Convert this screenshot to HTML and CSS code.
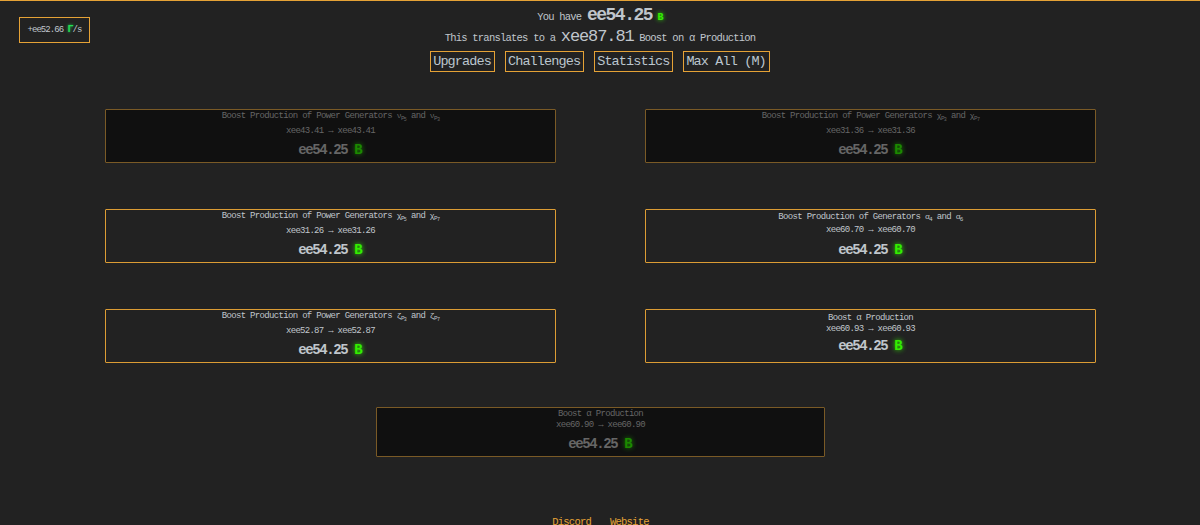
FILE: index.html
```html
<!DOCTYPE html>
<html lang="en">
<head>
<meta charset="utf-8">
<title>Boosts</title>
<link rel="stylesheet" href="styles.css">
</head>
<body>
<div class="rate">+ee52.66 <span class="gamma">Γ</span>/s</div>
<header class="head">
  <p class="have">You have <span class="big">ee54.25</span> <span class="bb">B</span></p>
  <p class="trans">This translates to a <span class="big2">xee87.81</span> Boost on α Production</p>
  <nav class="tabs">
    <button class="tab">Upgrades</button>
    <button class="tab">Challenges</button>
    <button class="tab">Statistics</button>
    <button class="tab">Max All (M)</button>
  </nav>
</header>
<main class="grid">
  <div class="card off">
    <div class="title">Boost Production of Power Generators <span class="g">ν<sub>P<sub>5</sub></sub></span> and <span class="g">ν<sub>P<sub>3</sub></sub></span></div>
    <div class="val">xee43.41 → xee43.41</div>
    <div class="cost">ee54.25 <span class="b">B</span></div>
  </div>
  <div class="card off">
    <div class="title">Boost Production of Power Generators <span class="g">χ<sub>P<sub>3</sub></sub></span> and <span class="g">χ<sub>P<sub>7</sub></sub></span></div>
    <div class="val">xee31.36 → xee31.36</div>
    <div class="cost">ee54.25 <span class="b">B</span></div>
  </div>
  <div class="card">
    <div class="title">Boost Production of Power Generators <span class="g">χ<sub>P<sub>5</sub></sub></span> and <span class="g">χ<sub>P<sub>7</sub></sub></span></div>
    <div class="val">xee31.26 → xee31.26</div>
    <div class="cost">ee54.25 <span class="b">B</span></div>
  </div>
  <div class="card gens">
    <div class="title">Boost Production of Generators <span class="g">α<sub>4</sub></span> and <span class="g">α<sub>6</sub></span></div>
    <div class="val">xee60.70 → xee60.70</div>
    <div class="cost">ee54.25 <span class="b">B</span></div>
  </div>
  <div class="card">
    <div class="title">Boost Production of Power Generators <span class="g">ζ<sub>P<sub>3</sub></sub></span> and <span class="g">ζ<sub>P<sub>7</sub></sub></span></div>
    <div class="val">xee52.87 → xee52.87</div>
    <div class="cost">ee54.25 <span class="b">B</span></div>
  </div>
  <div class="card plain">
    <div class="title">Boost α Production</div>
    <div class="val">xee60.93 → xee60.93</div>
    <div class="cost">ee54.25 <span class="b">B</span></div>
  </div>
  <div class="card off wide">
    <div class="title">Boost α Production</div>
    <div class="val">xee60.90 → xee60.90</div>
    <div class="cost">ee54.25 <span class="b">B</span></div>
  </div>
</main>
<footer class="foot">
  <a class="link" href="#">Discord</a>
  <a class="link" href="#">Website</a>
</footer>
</body>
</html>
```
FILE: styles.css
```css
html, body { margin: 0; padding: 0; }
body {
  background: #222222;
  color: #c0c6cc;
  font-family: "Liberation Mono", "DejaVu Sans Mono", monospace;
  font-size: 10.5px;
  letter-spacing: -0.77px;
  border-top: 1px solid #e5a236;
  height: 524px;
  overflow: hidden;
  text-align: center;
}
p { margin: 0; }
.rate {
  position: absolute;
  left: 19px;
  top: 17px;
  box-sizing: border-box;
  width: 71px;
  height: 26px;
  line-height: 24px;
  border: 1px solid #e5a236;
  font-size: 9px;
  letter-spacing: -0.95px;
  text-align: center;
  white-space: nowrap;
}
.gamma { color: #22dd55; font-weight: bold; font-size: 10px; text-shadow: 0 0 3px #22dd55; }
.head { height: 108px; }
.have { height: 23px; padding-top: 3px; line-height: 23px; }
.big { font-size: 18px; font-weight: bold; letter-spacing: -1.5px; }
.bb { color: #33ee00; font-weight: bold; font-size: 10px; text-shadow: 0 0 4px #33ee00; }
.trans { height: 20px; line-height: 20px; }
.big2 { font-size: 17px; letter-spacing: -1.1px; }
.tabs { display: flex; justify-content: center; gap: 10px; margin-top: 4px; }
.tab {
  font: inherit;
  font-size: 13.5px;
  letter-spacing: -0.88px;
  color: #bcc6ce;
  background: transparent;
  border: 1px solid #e5a236;
  height: 21px;
  padding: 0 3px 0 2px;
  margin: 0;
  line-height: 19px;
}
.grid {
  display: grid;
  grid-template-columns: 451px 451px;
  grid-auto-rows: 54px;
  column-gap: 89px;
  row-gap: 46px;
  padding-left: 105px;
}
.card {
  box-sizing: border-box;
  border: 1px solid #dc9c34;
  border-radius: 1px;
  display: flex;
  flex-direction: column;
  align-items: center;
  font-size: 9px;
  height: 54px;
}
.title { line-height: 11px; height: 16px; white-space: nowrap; letter-spacing: -0.67px; }
.val { line-height: 10px; height: 12px; letter-spacing: -0.72px; }
.cost { font-size: 14px; font-weight: bold; letter-spacing: -1.4px; line-height: 16px; margin-top: 4px; }
.b { color: #33ee00; text-shadow: 0 0 5px #33ee00; letter-spacing: 0; }
.g { font-size: 8px; }
sub { font-size: 6px; line-height: 0; vertical-align: -2px; }
sub sub { font-size: 5px; vertical-align: -1px; }
.gens .title { height: 14px; padding-top: 1px; }
.gens .cost { margin-top: 5px; }
.plain .title { padding-top: 3px; height: 11px; }
.plain .cost { margin-top: 2px; }
.off { background: #101010; color: #666666; border-color: #7a5a26; }
.off .b { color: #1c8a00; text-shadow: 0 0 5px #1c8a00; }
.wide {
  grid-column: 1 / 3;
  justify-self: center;
  width: 449px;
  height: 50px;
  margin-top: -2px;
}
.wide .title { padding-top: 1px; height: 11px; }
.wide .cost { margin-top: 4px; }
.foot { display: flex; justify-content: center; gap: 19px; margin-top: 53px; padding-left: 1px; }
.link { color: #e5a236; text-decoration: none; font-size: 10.5px; }
```
